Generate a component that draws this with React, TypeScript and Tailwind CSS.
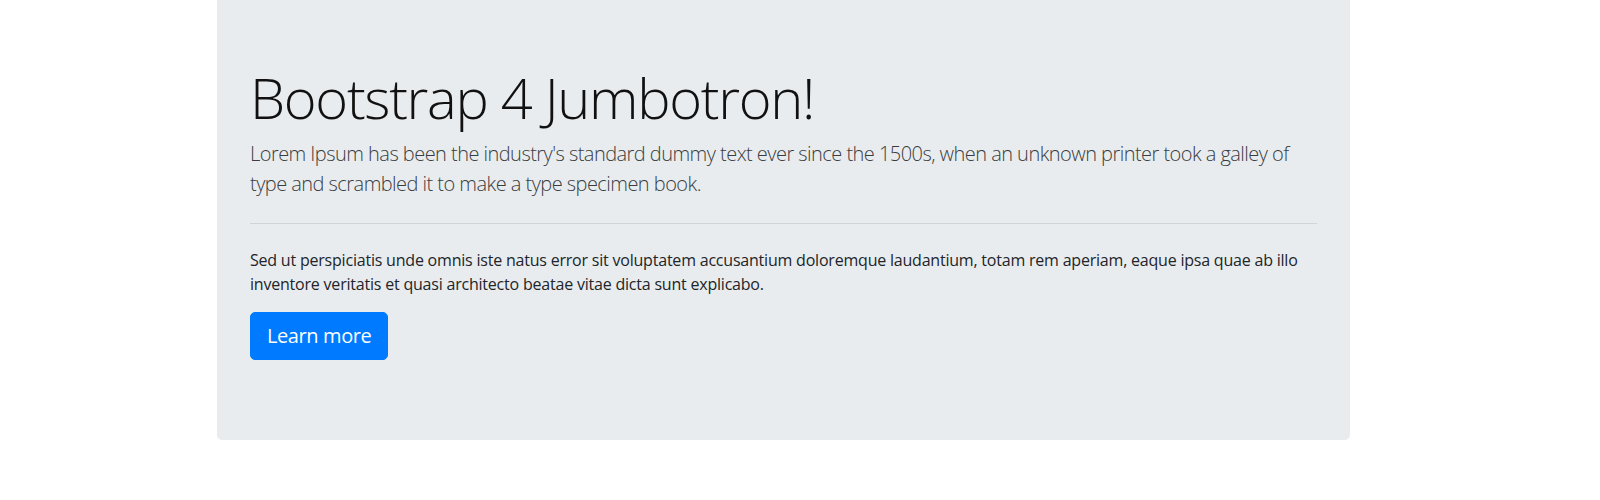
export default function App() {
  return (
    <main
      className="min-h-[500px] bg-white text-[#212529]"
      style={{ fontFamily: '"Open Sans", "Noto Sans", sans-serif' }}
    >
      <div className="ml-[217px] w-[1133px] rounded-b-[5px] bg-[#e9ecef] px-[33px] pt-16 pb-16">
        <h1 className="mb-2 text-[56px] font-light leading-[1.2] tracking-[-0.023em] text-[#111]">
          Bootstrap 4 Jumbotron!
        </h1>
        <p className="mb-4 text-[20px] font-light leading-[1.5] tracking-[-0.027em] text-[#3a3d40]">
          Lorem Ipsum has been the industry's standard dummy text ever since the 1500s, when an unknown printer took a galley
          of type and scrambled it to make a type specimen book.
        </p>
        <hr className="my-6 border-t border-black/10" />
        <p className="mb-4 text-base leading-[1.5] tracking-[-0.013em]">
          Sed ut perspiciatis unde omnis iste natus error sit voluptatem accusantium doloremque laudantium, totam rem
          aperiam, eaque ipsa quae ab illo inventore veritatis et quasi architecto beatae vitae dicta sunt explicabo.
        </p>
        <p className="mb-4 text-[20px] leading-[1.5]">
          <a
            href="#"
            className="inline-block rounded-[5px] border border-[#007bff] bg-[#007bff] px-4 py-2 text-[20px] font-normal leading-[1.5] tracking-[-0.02em] text-white"
          >
            Learn more
          </a>
        </p>
      </div>
    </main>
  );
}
